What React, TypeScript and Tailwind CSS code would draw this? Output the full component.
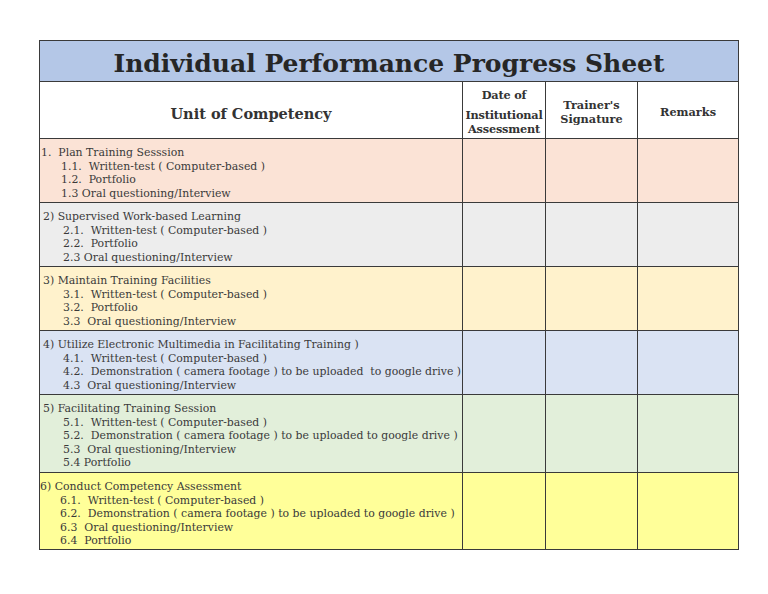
const rows = [
  {
    bg: 'bg-[#fbe3d6]',
    h: 'h-[64px]',
    pl: 'pl-[1px]',
    title: '1.  Plan Training Sesssion',
    items: ['1.1.  Written-test ( Computer-based )', '1.2.  Portfolio', '1.3 Oral questioning/Interview'],
  },
  {
    bg: 'bg-[#ededed]',
    h: 'h-[64px]',
    pl: 'pl-[3px]',
    title: '2) Supervised Work-based Learning',
    items: ['2.1.  Written-test ( Computer-based )', '2.2.  Portfolio', '2.3 Oral questioning/Interview'],
  },
  {
    bg: 'bg-[#fff2cc]',
    h: 'h-[64px]',
    pl: 'pl-[3px]',
    title: '3) Maintain Training Facilities',
    items: ['3.1.  Written-test ( Computer-based )', '3.2.  Portfolio', '3.3  Oral questioning/Interview'],
  },
  {
    bg: 'bg-[#dae3f3]',
    h: 'h-[64px]',
    pl: 'pl-[3px]',
    title: '4) Utilize Electronic Multimedia in Facilitating Training )',
    items: [
      '4.1.  Written-test ( Computer-based )',
      '4.2.  Demonstration ( camera footage ) to be uploaded  to google drive )',
      '4.3  Oral questioning/Interview',
    ],
  },
  {
    bg: 'bg-[#e2efda]',
    h: 'h-[78px]',
    pl: 'pl-[3px]',
    title: '5) Facilitating Training Session',
    items: [
      '5.1.  Written-test ( Computer-based )',
      '5.2.  Demonstration ( camera footage ) to be uploaded to google drive )',
      '5.3  Oral questioning/Interview',
      '5.4 Portfolio',
    ],
  },
  {
    bg: 'bg-[#ffff99]',
    h: 'h-[76px]',
    pl: 'pl-0',
    title: '6) Conduct Competency Assessment',
    items: [
      '6.1.  Written-test ( Computer-based )',
      '6.2.  Demonstration ( camera footage ) to be uploaded to google drive )',
      '6.3  Oral questioning/Interview',
      '6.4  Portfolio',
    ],
  },
];

const serif = "font-['DejaVu_Serif',serif]";

export default function App() {
  return (
    <div className="h-[594px] w-[768px] bg-white pl-[39px] pt-[40px]">
      <div className={`w-[700px] border border-[#3a3a3a] text-[#333] ${serif}`}>
        {/* Title */}
        <div className="flex h-[41px] items-center justify-center border-b border-[#3a3a3a] bg-[#b4c7e7] pt-[6px] text-[25px] font-bold text-[#262626]">
          Individual Performance Progress Sheet
        </div>

        {/* Column headers */}
        <div className="grid h-[57px] grid-cols-[422px_83px_92px_101px] border-b border-[#3a3a3a] font-bold text-[#333]">
          <div className="flex items-center justify-center pt-[8px] text-[14.5px]">Unit of Competency</div>
          <div className="flex flex-col items-center border-l border-[#3a3a3a] pt-[6px] text-[11.3px] leading-[14px] tracking-[-0.2px]">
            <span>Date of</span>
            <span className="mt-[6px]">Institutional</span>
            <span>Assessment</span>
          </div>
          <div className="flex flex-col items-center justify-center border-l border-[#3a3a3a] pt-[4px] text-[11.3px] leading-[14px]">
            <span>Trainer's</span>
            <span>Signature</span>
          </div>
          <div className="flex items-center justify-center border-l border-[#3a3a3a] pt-[5px] text-[11.3px]">Remarks</div>
        </div>

        {/* Competency rows */}
        {rows.map((row, i) => (
          <div
            key={i}
            className={`grid grid-cols-[422px_83px_92px_101px] ${row.h} ${row.bg} ${
              i < rows.length - 1 ? 'border-b border-[#3a3a3a]' : ''
            }`}
          >
            <div className={`pt-[7px] text-[10.9px] leading-[13.6px] whitespace-pre text-[#3a3a3a] ${row.pl}`}>
              <div>{row.title}</div>
              {row.items.map((item) => (
                <div key={item} className="pl-[20px]">
                  {item}
                </div>
              ))}
            </div>
            <div className="border-l border-[#3a3a3a]" />
            <div className="border-l border-[#3a3a3a]" />
            <div className="border-l border-[#3a3a3a]" />
          </div>
        ))}
      </div>
    </div>
  );
}
